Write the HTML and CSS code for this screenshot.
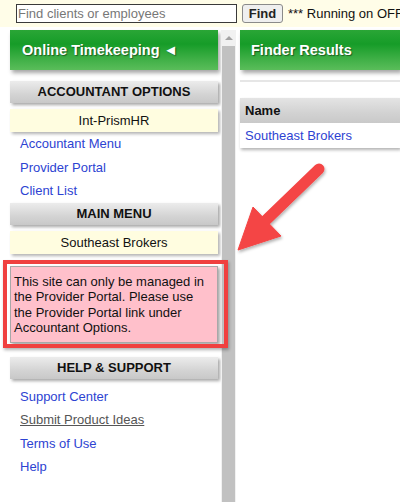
FILE: index.html
```html
<!DOCTYPE html>
<html>
<head>
<meta charset="utf-8">
<link rel="stylesheet" href="styles.css">
</head>
<body>
<div class="topbar">
  <input class="search" type="text" placeholder="Find clients or employees">
  <button class="find">Find</button>
  <span class="running">*** Running on OFF</span>
</div>
<div class="main">
  <div class="leftcol">
    <div class="green">Online Timekeeping ◄</div>
    <div class="hdr first">ACCOUNTANT OPTIONS</div>
    <div class="yellow">Int-PrismHR</div>
    <a class="link" href="#">Accountant Menu</a>
    <a class="link" href="#">Provider Portal</a>
    <a class="link" href="#">Client List</a>
    <div class="hdr">MAIN MENU</div>
    <div class="yellow">Southeast Brokers</div>
    <div class="notice">This site can only be managed in the Provider Portal. Please use the Provider Portal link under Accountant Options.</div>
    <div class="hdr help">HELP &amp; SUPPORT</div>
    <a class="link" href="#">Support Center</a>
    <a class="link visited" href="#">Submit Product Ideas</a>
    <a class="link" href="#">Terms of Use</a>
    <a class="link" href="#">Help</a>
  </div>
  <div class="scrollbar">
    <div class="sb-up"><span class="sb-tri"></span></div>
    <div class="sb-thumb"></div>
  </div>
  <div class="rightpane">
    <div class="green right">Finder Results</div>
    <div class="sep"></div>
    <div class="table">
      <div class="th">Name</div>
      <div class="td"><a class="link-inline" href="#">Southeast Brokers</a></div>
    </div>
  </div>
</div>
<svg class="arrow" width="400" height="502" viewBox="0 0 400 502">
  <defs>
    <filter id="sh" x="-20%" y="-20%" width="140%" height="140%">
      <feDropShadow dx="1" dy="2" stdDeviation="1.5" flood-color="#000" flood-opacity="0.3"/>
    </filter>
  </defs>
  <g filter="url(#sh)" fill="#f44444" stroke="#f44444">
    <line x1="319" y1="169" x2="262" y2="224" stroke-width="11" stroke-linecap="round"/>
    <polygon points="238,250 253,207 281,236" stroke-width="1" stroke-linejoin="round"/>
  </g>
</svg>
</body>
</html>
```
FILE: styles.css
```css
html, body {
  margin: 0;
  padding: 0;
}
body {
  width: 400px;
  height: 502px;
  overflow: hidden;
  font-family: "Liberation Sans", Arial, sans-serif;
  font-size: 13px;
  color: #111;
  background: #fff;
  position: relative;
}
.topbar {
  height: 27px;
  background: #fffde8;
  display: flex;
  align-items: center;
  padding-left: 16px;
  white-space: nowrap;
  box-sizing: border-box;
  overflow: hidden;
}
.search {
  flex: none;
  width: 221px;
  height: 19px;
  box-sizing: border-box;
  border: 1px solid #3a3a3a;
  padding: 0 1px;
  font-family: "Liberation Sans", Arial, sans-serif;
  font-size: 13px;
  margin: 0;
  background: #fff;
}
.search::placeholder {
  color: #777;
}
.find {
  flex: none;
  margin: 0 0 0 5px;
  width: 41px;
  height: 19px;
  padding: 0;
  border: 1px solid #8a8a8a;
  border-radius: 3px;
  background: #efefef;
  font-family: "Liberation Sans", Arial, sans-serif;
  font-size: 13px;
  font-weight: bold;
  color: #222;
}
.running {
  flex: none;
  margin-left: 5px;
  font-size: 13px;
  color: #111;
}
.main {
  display: flex;
  padding-top: 3px;
  height: 475px;
  box-sizing: border-box;
  overflow: hidden;
}
.leftcol {
  width: 208px;
  margin-left: 10px;
  flex: none;
  display: flex;
  flex-direction: column;
}
.green {
  height: 40px;
  box-sizing: border-box;
  background: linear-gradient(#2aa636 0%, #169c28 35%, #3cae44 70%, #5abd5a 100%);
  color: #fff;
  font-weight: bold;
  font-size: 14.5px;
  display: flex;
  align-items: center;
  padding-left: 12px;
  text-shadow: 1px 1px 1px rgba(0,0,0,0.45);
  box-shadow: 2px 3px 4px rgba(0,0,0,0.35);
}
.green.right {
  padding-left: 11px;
}
.hdr {
  height: 22px;
  background: linear-gradient(#ececec, #d4d4d4 60%, #c8c8c8);
  box-shadow: 2px 2px 3px rgba(0,0,0,0.35);
  text-align: center;
  font-weight: bold;
  font-size: 13px;
  line-height: 22px;
  color: #111;
  margin-bottom: 6px;
}
.hdr.first {
  margin-top: 11px;
}
.hdr.help {
  margin-top: 14px;
}
.yellow {
  height: 23px;
  line-height: 23px;
  background: #fffde0;
  box-shadow: 2px 2px 3px rgba(0,0,0,0.3);
  text-align: center;
  font-size: 13px;
  color: #111;
}
.link {
  display: block;
  height: 23.5px;
  line-height: 23.5px;
  padding-left: 10px;
  color: #2d43d2;
  text-decoration: none;
  font-size: 13px;
}
.link.visited {
  color: #555;
  text-decoration: underline;
}
.notice {
  position: relative;
  margin-top: 12px;
  background: #ffc0cb;
  border: 1px solid #a8a8a8;
  box-shadow: 2px 2px 3px rgba(0,0,0,0.35);
  padding: 7px 3px 6px 3px;
  line-height: 15.5px;
  font-size: 13px;
  color: #111;
}
.notice::after {
  content: "";
  position: absolute;
  top: -7px;
  left: -8px;
  right: -11px;
  bottom: -6px;
  border: 4px solid #f0403f;
  box-shadow: 1px 2px 3px rgba(0,0,0,0.3);
}
.scrollbar {
  width: 15px;
  margin-left: 3px;
  flex: none;
  background: #f1f1f1;
  display: flex;
  flex-direction: column;
}
.sb-up {
  height: 16px;
  display: flex;
  justify-content: center;
  align-items: center;
}
.sb-tri {
  width: 0;
  height: 0;
  border-left: 4px solid transparent;
  border-right: 4px solid transparent;
  border-bottom: 4px solid #a3a3a3;
}
.sb-thumb {
  flex: 1;
  background: #c1c1c1;
  margin: 0 1px 0 1px;
}
.rightpane {
  flex: 1;
  margin-left: 4px;
  display: flex;
  flex-direction: column;
}
.sep {
  margin-top: 10px;
  height: 2px;
  background: #e6e6e6;
}
.table {
  margin-top: 16px;
  box-shadow: 1px 2px 3px rgba(0,0,0,0.3);
}
.th {
  height: 25px;
  line-height: 25px;
  background: linear-gradient(#e4e4e4, #d2d2d2 60%, #c9c9c9);
  font-weight: bold;
  padding-left: 5px;
  font-size: 13px;
  color: #111;
}
.td {
  height: 25px;
  line-height: 25px;
  padding-left: 5px;
  background: #fff;
}
.link-inline {
  color: #2d43d2;
  text-decoration: none;
  font-size: 13px;
}
.arrow {
  position: absolute;
  left: 0;
  top: 0;
  pointer-events: none;
}
```
